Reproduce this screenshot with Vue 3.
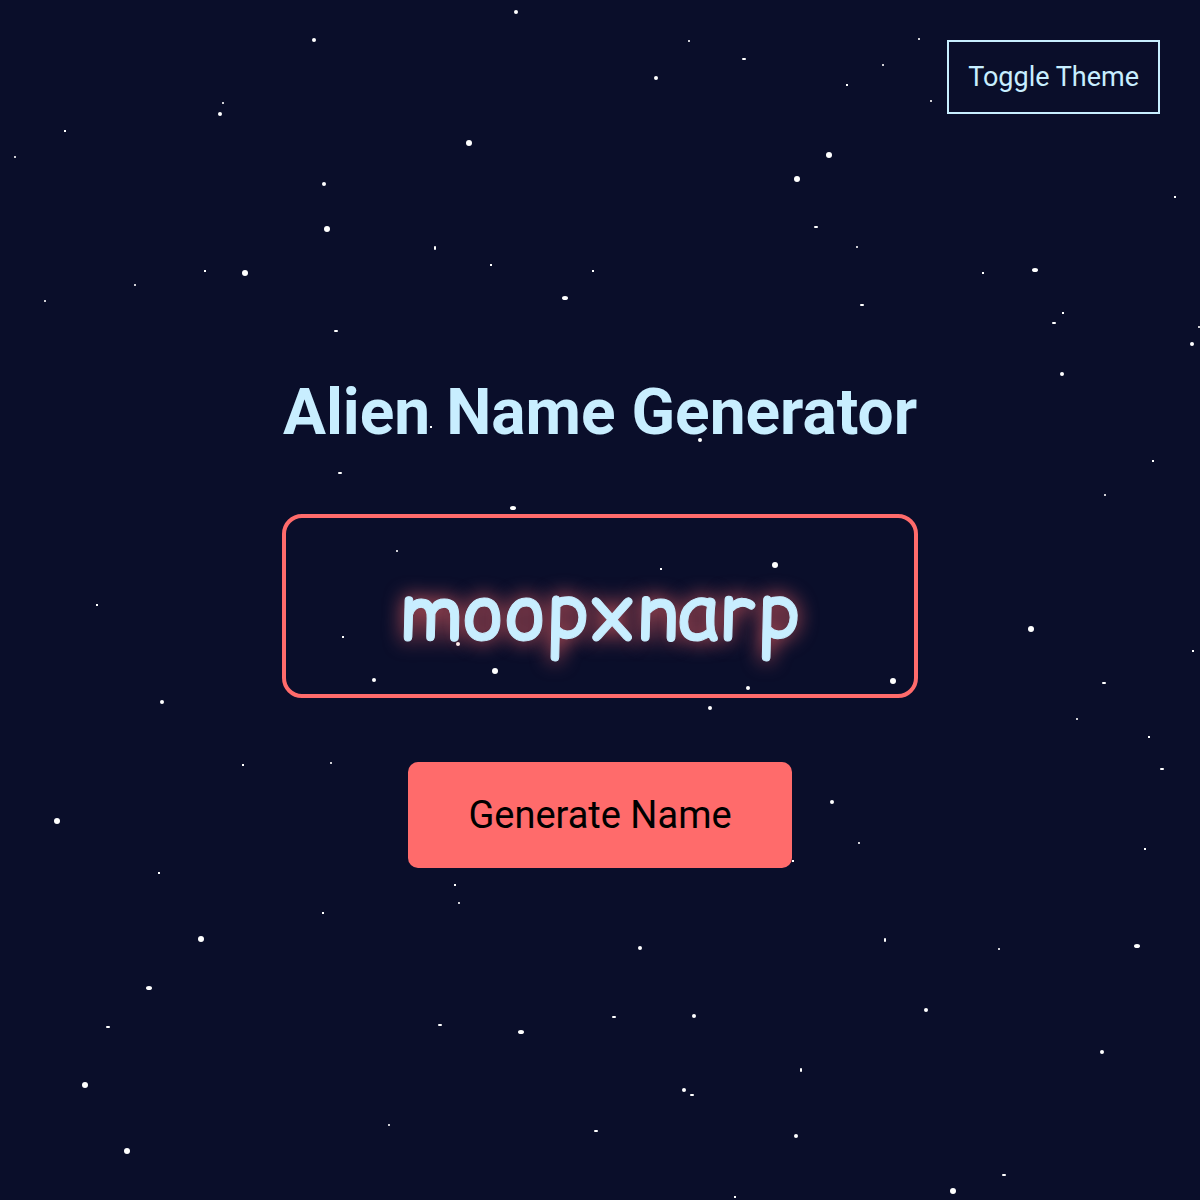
<script setup>
import { ref } from 'vue'

const syllables = ['moop', 'xnarp', 'zib', 'glor', 'quax', 'vree', 'blip', 'thuk']

const name = ref('moopxnarp')
const light = ref(false)

// x, y (top left corner), width, height, dim
const stars = [
    [514, 10, 4, 4], [312, 38, 4, 4], [688, 40, 2, 2, 1], [742, 58, 4, 2], [654, 76, 4, 4],
    [918, 38, 2, 2, 1], [882, 64, 2, 2, 1], [846, 84, 2, 2], [930, 100, 2, 2, 1], [222, 102, 2, 2, 1],
    [218, 112, 4, 4], [64, 130, 2, 2], [14, 156, 2, 2, 1], [466, 140, 6, 6], [826, 152, 6, 6],
    [794, 176, 6, 6], [322, 182, 4, 4], [1174, 196, 2, 2], [324, 226, 6, 6], [814, 226, 4, 2],
    [434, 246, 2, 4], [856, 246, 2, 2, 1], [490, 264, 2, 2], [592, 270, 2, 2], [204, 270, 2, 2],
    [242, 270, 6, 6], [982, 272, 2, 2], [1032, 268, 6, 4], [134, 284, 2, 2, 1], [44, 300, 2, 2, 1],
    [562, 296, 6, 4], [860, 304, 4, 2], [1062, 312, 2, 2], [1052, 322, 4, 2], [1198, 326, 2, 2, 1],
    [334, 330, 4, 2], [1190, 342, 4, 4], [1060, 372, 4, 4], [430, 426, 2, 2], [698, 438, 4, 4],
    [1152, 460, 2, 2], [338, 472, 4, 2], [1104, 494, 2, 2, 1], [510, 506, 6, 4], [396, 550, 2, 2, 1],
    [772, 562, 6, 6], [660, 568, 2, 2], [96, 604, 2, 2], [1028, 626, 6, 6], [342, 636, 2, 2],
    [456, 642, 4, 4], [1192, 650, 2, 2], [492, 668, 6, 6], [372, 678, 4, 4], [890, 678, 6, 6],
    [1102, 682, 4, 2], [746, 686, 4, 4], [160, 700, 4, 4], [708, 706, 4, 4], [1076, 718, 2, 2, 1],
    [1148, 736, 2, 2], [330, 762, 2, 2, 1], [242, 764, 2, 2], [1160, 768, 4, 2], [830, 800, 4, 4],
    [54, 818, 6, 6], [858, 842, 2, 2, 1], [1144, 848, 2, 2], [792, 860, 2, 2], [158, 872, 2, 2],
    [454, 884, 2, 2], [458, 902, 2, 2, 1], [322, 912, 2, 2], [198, 936, 6, 6], [884, 938, 2, 4],
    [1134, 944, 6, 4], [638, 946, 4, 4], [998, 948, 2, 2, 1], [146, 986, 6, 4], [924, 1008, 4, 4],
    [612, 1016, 4, 2], [692, 1014, 4, 4], [438, 1024, 4, 2], [106, 1026, 4, 2], [518, 1030, 6, 4],
    [1100, 1050, 4, 4], [800, 1068, 2, 4], [82, 1082, 6, 6], [682, 1088, 4, 4], [690, 1094, 4, 2],
    [388, 1124, 2, 2, 1], [594, 1130, 4, 2], [794, 1134, 4, 4], [124, 1148, 6, 6], [1002, 1174, 4, 2],
    [950, 1188, 6, 6], [734, 1196, 2, 2]
]

const starStyle = ([x, y, w, h]) => ({
    left: x / 12 + '%',
    top: y / 12 + '%',
    width: w + 'px',
    height: h + 'px'
})

const pick = () => syllables[Math.floor(Math.random() * syllables.length)]

const generateName = () => {
    name.value = pick() + pick()
}
</script>

<template>
    <div class="page" :class="{ light }">
        <div class="sky" aria-hidden="true">
            <span v-for="(star, i) in stars" :key="i" class="star"
                :class="{ dim: star[4], dot: star[2] > 2 && star[3] > 2, dash: star[2] !== star[3] && star[2] < 6 }"
                :style="starStyle(star)"></span>
        </div>

        <button type="button" class="btn-theme" @click="light = !light">Toggle Theme</button>

        <main class="generator">
            <h1>Alien Name Generator</h1>
            <div class="name-box">
                <output class="name">{{ name }}</output>
            </div>
            <button type="button" class="btn-generate" @click="generateName">Generate Name</button>
        </main>
    </div>
</template>

<style>
body {
    margin: 0;
    background: #0a0e2a;
}
</style>

<style scoped>
.page {
    --bg: #0a0e2a;
    --fg: #c8eeff;
    --accent: #ff6b6b;
    --star: #ffffff;
    position: relative;
    box-sizing: border-box;
    display: flex;
    flex-direction: column;
    align-items: center;
    justify-content: center;
    min-height: 100vh;
    padding-top: 44px;
    overflow: hidden;
    background: var(--bg);
    color: var(--fg);
    font-family: Roboto, sans-serif;
}

.page.light {
    --bg: #f0f8ff;
    --fg: #16204f;
    --star: #8090c0;
}

.sky {
    position: absolute;
    inset: 0;
}

.star {
    position: absolute;
    background: var(--star);
}

.star.dot {
    border-radius: 50%;
}

.star.dash {
    border-radius: 1px;
}

.star.dim {
    opacity: 0.8;
}

.btn-theme {
    position: absolute;
    top: 40px;
    right: 40px;
    padding: 20px 19px;
    border: 2px solid var(--fg);
    background: transparent;
    color: var(--fg);
    font: 27px/30px Roboto, sans-serif;
    cursor: pointer;
}

.generator {
    position: relative;
    display: flex;
    flex-direction: column;
    align-items: center;
}

h1 {
    margin: 0 0 64px;
    font-size: 64px;
    line-height: 74px;
    font-weight: 700;
}

.name-box {
    display: flex;
    align-items: center;
    justify-content: center;
    box-sizing: border-box;
    min-width: 636px;
    min-height: 184px;
    margin-bottom: 64px;
    border: 4px solid var(--accent);
    border-radius: 20px;
}

.name {
    padding-top: 10px;
    font-family: "Comic Relief", "Comic Sans MS", cursive;
    font-size: 80px;
    line-height: 96px;
    font-weight: 400;
    -webkit-text-stroke: 1px var(--fg);
    text-shadow: 0 0 20px var(--accent);
}

.btn-generate {
    padding: 30px 60px;
    border: none;
    border-radius: 10px;
    background: var(--accent);
    color: #000;
    font: 38px/46px Roboto, sans-serif;
    cursor: pointer;
}
</style>
